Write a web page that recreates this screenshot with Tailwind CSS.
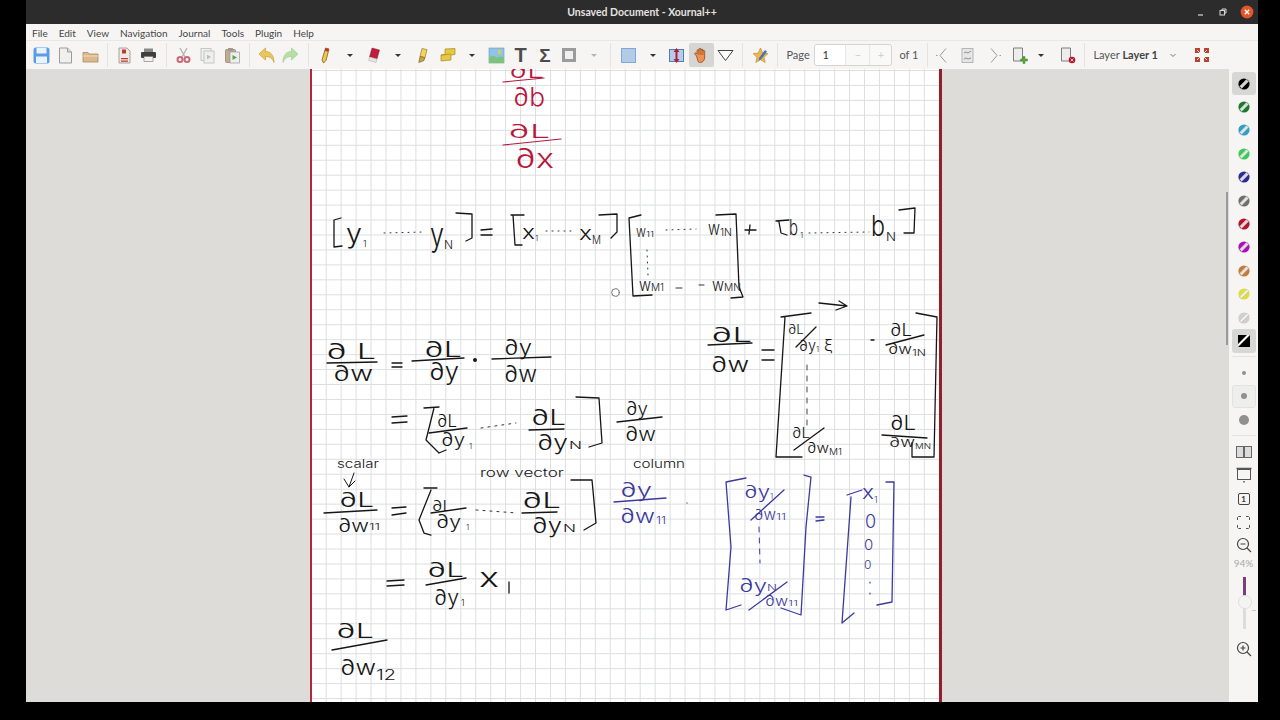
<!doctype html>
<html lang="en">
  <head>
    <meta charset="UTF-8" />
    <title>Unsaved Document - Xournal++</title>
    <script src="https://cdn.jsdelivr.net/npm/@tailwindcss/browser@4"></script>
  </head>
  <body class="bg-black w-[1280px] h-[720px] overflow-hidden font-['Lato',sans-serif]">
    <!-- shared pen colour swatch, tinted through currentColor -->
    <svg class="hidden">
      <symbol id="pen" viewBox="0 0 14 14">
        <circle cx="7" cy="7" r="5.6" fill="currentColor" />
        <path d="M2.6 9.2 9.4 2.2 11.6 4.4 4.8 11.6Z" fill="#fff" fill-opacity="0.85" />
        <path d="M2 10.4 10.4 2M3.8 12 12 3.8" stroke="#a8a8a8" stroke-width="0.7" fill="none" />
      </symbol>
    </svg>

    <div class="ml-[26px] w-[1232px] h-[702px] flex flex-col bg-[#f6f5f4]">
      <!-- title bar -->
      <div class="h-[24px] shrink-0 bg-[#2d2c2c] relative flex items-center justify-center pt-[1px]">
        <span class="text-[10.5px] font-bold text-[#e4e3e1]">Unsaved Document - Xournal++</span>
        <div class="absolute right-[4px] top-0 h-[24px] flex items-center gap-[9px]">
          <svg class="w-[14px] h-[14px]" viewBox="0 0 14 14"><path d="M4 10h5" stroke="#d8d8d8" stroke-width="1.2" /></svg>
          <svg class="w-[14px] h-[14px] ml-[-1px]" viewBox="0 0 14 14" fill="none" stroke="#d8d8d8"><rect x="4" y="5.5" width="4.5" height="4.5" /><path d="M6 5.5V4h4v4H8.5" /></svg>
          <svg class="w-[14px] h-[14px] ml-[1px]" viewBox="0 0 14 14"><circle cx="7" cy="7" r="6.4" fill="#e2562a" /><path d="M4.8 4.8l4.4 4.4M9.2 4.8l-4.4 4.4" stroke="#fff" stroke-width="1.3" /></svg>
        </div>
      </div>

      <!-- menu -->
      <div class="h-[17px] shrink-0 flex items-center gap-[11px] pl-[6px] pt-[2px] text-[10px] text-[#454545] border-b border-[#e8e7e5]">
        <span>File</span><span>Edit</span><span>View</span><span>Navigation</span><span>Journal</span><span>Tools</span><span>Plugin</span><span>Help</span>
      </div>

      <!-- toolbar -->
      <div class="h-[28px] shrink-0 flex items-center pl-[3px] text-[11px] text-[#555]">
        <div class="w-[24.42px] h-[24px] flex items-center justify-center">
          <svg class="w-[17px] h-[17px]" viewBox="0 0 17 17"><rect x="0.5" y="0.5" width="16" height="16" rx="2.5" fill="#5b9ce6" /><rect x="3.5" y="1" width="10" height="5.5" fill="#eaf2fc" /><rect x="3" y="9.5" width="11" height="6.5" fill="#eaf2fc" /></svg>
        </div>
        <div class="w-[24.42px] h-[24px] flex items-center justify-center">
          <svg class="w-[17px] h-[17px]" viewBox="0 0 17 17"><path d="M2.5 1h8l4 4v11h-12Z" fill="#f0f0ef" stroke="#9b9b9b" /><path d="M10.5 1v4h4" fill="#ddd" stroke="#9b9b9b" /></svg>
        </div>
        <div class="w-[24.42px] h-[24px] flex items-center justify-center">
          <svg class="w-[17px] h-[17px]" viewBox="0 0 17 17"><path d="M1 5.5h5l1 1.5h9v8H1Z" fill="#dcb98c" stroke="#a58a63" stroke-width="0.8" /><path d="M1 9h15" stroke="#f0dcc0" /></svg>
        </div>
        <div class="w-[10px] h-[24px] flex justify-center"><div class="w-px h-full bg-[#e4e3e1]"></div></div>
        <div class="w-[24.42px] h-[24px] flex items-center justify-center">
          <svg class="w-[17px] h-[17px]" viewBox="0 0 17 17"><path d="M3 1h8l3 3v12H3Z" fill="#efe8e6" stroke="#9b8f8c" stroke-width="0.8" /><path d="M6 2.5h4v4H6ZM5 11h7v1.2H5ZM5 13.5h7v1.2H5Z" fill="#c0392f" /></svg>
        </div>
        <div class="w-[24.42px] h-[24px] flex items-center justify-center">
          <svg class="w-[17px] h-[17px]" viewBox="0 0 17 17"><rect x="4" y="1.5" width="9" height="4" fill="#8a8a8a" /><rect x="1" y="5" width="15" height="6" rx="1" fill="#3f3f3f" /><rect x="4" y="9.5" width="9" height="5" fill="#f2f2f2" stroke="#777" stroke-width="0.6" /></svg>
        </div>
        <div class="w-[10px] h-[24px] flex justify-center"><div class="w-px h-full bg-[#e4e3e1]"></div></div>
        <div class="w-[24.42px] h-[24px] flex items-center justify-center">
          <svg class="w-[17px] h-[17px]" viewBox="0 0 17 17" fill="none"><path d="M5 1l5 9M12 1l-5 9" stroke="#b5b5b5" stroke-width="1.4" /><circle cx="5" cy="12.5" r="2.5" stroke="#c9687a" stroke-width="2" /><circle cx="12" cy="12.5" r="2.5" stroke="#c9687a" stroke-width="2" /></svg>
        </div>
        <div class="w-[24.42px] h-[24px] flex items-center justify-center">
          <svg class="w-[17px] h-[17px]" viewBox="0 0 17 17"><rect x="2" y="1.5" width="10" height="12" fill="#efefee" stroke="#c6c6c6" /><rect x="5" y="4" width="10" height="12" fill="#efefee" stroke="#c6c6c6" /><path d="M8 7.5l4 2.5-4 2.5Z" fill="#a5cfa5" /></svg>
        </div>
        <div class="w-[24.42px] h-[24px] flex items-center justify-center">
          <svg class="w-[17px] h-[17px]" viewBox="0 0 17 17"><rect x="1.5" y="2.5" width="10" height="13" rx="1" fill="#c2ab8c" stroke="#8d7b65" stroke-width="0.7" /><rect x="4" y="1" width="5" height="3" fill="#9a9a9a" /><rect x="6" y="5" width="9.5" height="11" fill="#eee" stroke="#999" stroke-width="0.7" /><path d="M8.5 8l4.5 2.5L8.5 13Z" fill="#58a83f" /></svg>
        </div>
        <div class="w-[10px] h-[24px] flex justify-center"><div class="w-px h-full bg-[#e4e3e1]"></div></div>
        <div class="w-[24.42px] h-[24px] flex items-center justify-center">
          <svg class="w-[17px] h-[17px]" viewBox="0 0 17 17"><path d="M1 7l6.5-6v3.5c5 0 8.5 3.5 8.5 11-1.5-4-4-6-8.5-6V13Z" fill="#ecc65a" stroke="#c99f36" stroke-width="0.7" /></svg>
        </div>
        <div class="w-[24.42px] h-[24px] flex items-center justify-center">
          <svg class="w-[17px] h-[17px]" viewBox="0 0 17 17"><path d="M16 7L9.5 1v3.5C4.500 4.500 1 8 1 15.500c1.500-4 4-6 8.500-6V13Z" fill="#b5dfa5" stroke="#a0cf90" stroke-width="0.7" /></svg>
        </div>
        <div class="w-[10px] h-[24px] flex justify-center"><div class="w-px h-full bg-[#e4e3e1]"></div></div>
        <div class="w-[24.42px] h-[24px] flex items-center justify-center">
          <svg class="w-[17px] h-[17px]" viewBox="0 0 17 17"><path d="M8.500 1l3.500 1-3 11.500-2.500 2.500-1.500-3Z" fill="#edc64c" stroke="#7d6128" stroke-width="0.8" /><path d="M8.500 1l3.500 1-.8 2.800-3.500-1Z" fill="#c0392f" /></svg>
        </div>
        <div class="w-[24.42px] h-[24px] flex items-center justify-center"><div class="border-x-[3px] border-t-[3.5px] border-x-transparent border-t-[#333]"></div></div>
        <div class="w-[24.42px] h-[24px] flex items-center justify-center">
          <svg class="w-[17px] h-[17px]" viewBox="0 0 17 17"><path d="M6 1l7.500 2-2.500 9-7.500-2Z" fill="#c01c3c" stroke="#8f1530" stroke-width="0.5" /><path d="M3.500 10l7.500 2-.9 3.500-7.500-2Z" fill="#e6e3e1" stroke="#aaa" stroke-width="0.5" /></svg>
        </div>
        <div class="w-[24.42px] h-[24px] flex items-center justify-center"><div class="border-x-[3px] border-t-[3.5px] border-x-transparent border-t-[#333]"></div></div>
        <div class="w-[24.42px] h-[24px] flex items-center justify-center">
          <svg class="w-[17px] h-[17px]" viewBox="0 0 17 17"><path d="M8 1.500l5 1.200-2 8-5-1.200Z" fill="#f3d55b" stroke="#8b7a2d" stroke-width="0.7" /><path d="M6 9.500l5 1.200-1.200 3-5 1.800Z" fill="#c3a53a" stroke="#6f6022" stroke-width="0.6" /></svg>
        </div>
        <div class="w-[24.42px] h-[24px] flex items-center justify-center">
          <svg class="w-[17px] h-[17px]" viewBox="0 0 17 17"><path d="M6 2l10-.5v6l-4 .5v5l-10 1v-6l4-.5Z" fill="#e9c83f" stroke="#a18a28" stroke-width="0.7" /><path d="M2 8l10-1" stroke="#a18a28" stroke-width="0.7" /></svg>
        </div>
        <div class="w-[24.42px] h-[24px] flex items-center justify-center"><div class="border-x-[3px] border-t-[3.5px] border-x-transparent border-t-[#333]"></div></div>
        <div class="w-[24.42px] h-[24px] flex items-center justify-center">
          <svg class="w-[17px] h-[17px]" viewBox="0 0 17 17"><rect x="1" y="1" width="15" height="15" fill="#8fc4e8" stroke="#5f9dbb" stroke-width="0.6" /><path d="M1 16v-5c3-3 5-3 8 0 2-2 5-2 7 0v5Z" fill="#7dc47a" /><circle cx="11.500" cy="5" r="2" fill="#e3c94f" /></svg>
        </div>
        <div class="w-[24.42px] h-[24px] flex items-center justify-center text-[20px] leading-none font-bold text-[#4c4c4c] font-['Liberation_Sans',sans-serif]">T</div>
        <div class="w-[24.42px] h-[24px] flex items-center justify-center text-[19px] leading-none font-bold text-[#4c4c4c] font-['Liberation_Sans',sans-serif]">Σ</div>
        <div class="w-[24.42px] h-[24px] flex items-center justify-center"><div class="w-[14px] h-[14px] border-[3px] border-[#9b9b9b] bg-[#f0f0f0]"></div></div>
        <div class="w-[24.42px] h-[24px] flex items-center justify-center"><div class="border-x-[3px] border-t-[3.5px] border-x-transparent border-t-[#b5b5b5]"></div></div>
        <div class="w-[10px] h-[24px] flex justify-center"><div class="w-px h-full bg-[#e4e3e1]"></div></div>
        <div class="w-[24.42px] h-[24px] flex items-center justify-center"><div class="w-[15px] h-[15px] bg-[#b4cbe8] border border-[#7ea6d6]"></div></div>
        <div class="w-[24.42px] h-[24px] flex items-center justify-center"><div class="border-x-[3px] border-t-[3.5px] border-x-transparent border-t-[#333]"></div></div>
        <div class="w-[24.42px] h-[24px] flex items-center justify-center">
          <svg class="w-[17px] h-[17px]" viewBox="0 0 17 17"><rect x="1.500" y="2.500" width="14" height="12" fill="#b6cdea" stroke="#4f7cb5" /><path d="M8.500 1l3 4h-2v7h2l-3 4-3-4h2V5h-2Z" fill="#b01e3a" /></svg>
        </div>
        <div class="w-[24.42px] h-[24px] rounded-[2px] bg-[#d5d5d4] flex items-center justify-center">
          <svg class="w-[17px] h-[17px]" viewBox="0 0 17 17"><path d="M3.500 9l-2-2.500c.8-1 2-.8 2.600.2V3.500c0-1.200 1.700-1.200 1.800 0V2.300c0-1.300 1.900-1.300 2 0v.7c.1-1.200 1.900-1.200 2 0v1c.2-1 1.800-.8 1.800.3V10c0 3.500-2 5.500-4.500 5.500S5 14 3.500 9Z" fill="#f0914f" stroke="#8c4a1c" stroke-width="0.8" /><path d="M5.900 3.500V8M7.900 2.500V8M9.900 3V8" stroke="#8c4a1c" stroke-width="0.7" fill="none" /></svg>
        </div>
        <div class="w-[24.42px] h-[24px] flex items-center justify-center">
          <svg class="w-[17px] h-[17px]" viewBox="0 0 17 17"><path d="M1 3.500h15l-7.500 10Z" fill="#fff" stroke="#444" stroke-width="1" /></svg>
        </div>
        <div class="w-[10px] h-[24px] flex justify-center"><div class="w-px h-full bg-[#e4e3e1]"></div></div>
        <div class="w-[24.42px] h-[24px] flex items-center justify-center">
          <svg class="w-[17px] h-[17px]" viewBox="0 0 17 17"><path d="M8.500 1l2.300 5 5.200.6-3.900 3.600 1.100 5.300-4.700-2.700-4.700 2.700 1.100-5.300L1 6.600l5.200-.6Z" fill="#e9b949" stroke="#b98a26" stroke-width="0.6" /><path d="M7 11l6-8 2 1.500-6 8-2.500 1Z" fill="#4f6fc0" /></svg>
        </div>
        <div class="w-[10px] h-[24px] flex justify-center"><div class="w-px h-full bg-[#e4e3e1]"></div></div>
        <span class="w-[24px] ml-[4px]">Page</span>
        <div class="ml-[4px] w-[78px] h-[22px] flex border border-[#d5d4d2] rounded-[3px] bg-[#f9f9f8]">
          <span class="w-[30px] pl-[7px] leading-[20px] text-[#333] bg-white rounded-l-[3px]">1</span>
          <span class="w-[24px] text-center leading-[20px] text-[#cfcfcf] border-l border-[#e8e7e5]">−</span>
          <span class="flex-1 text-center leading-[20px] text-[#cfcfcf] border-l border-[#e8e7e5]">+</span>
        </div>
        <span class="ml-[7px] w-[20px] whitespace-nowrap">of 1</span>
        <div class="ml-[3px] w-[10px] h-[24px] flex justify-center"><div class="w-px h-full bg-[#e4e3e1]"></div></div>
        <div class="w-[20px] h-[24px] flex items-center justify-center">
          <svg class="w-[17px] h-[17px]" viewBox="0 0 17 17" fill="none" stroke="#9a9a9a"><path d="M12 1.500 6 8.500l6 7" /><path d="M2 8.500h1.500" /></svg>
        </div>
        <div class="w-[32px] h-[24px] flex items-center justify-center">
          <svg class="w-[14px] h-[15px]" viewBox="0 0 14 15"><rect x="1" y="0.500" width="11" height="14" fill="#e6e6e6" stroke="#b5b5b5" /><path d="M3 5l2-1 2 1 3-2M3 11l2-1 2 1 3-1" stroke="#8f8f8f" fill="none" /></svg>
        </div>
        <div class="w-[20px] h-[24px] flex items-center justify-center">
          <svg class="w-[17px] h-[17px]" viewBox="0 0 17 17" fill="none" stroke="#9a9a9a"><path d="M5 1.500l6 7-6 7" /><path d="M13.500 8.500H15" /></svg>
        </div>
        <div class="w-[30px] h-[24px] flex items-center justify-center">
          <svg class="w-[17px] h-[17px]" viewBox="0 0 17 17"><path d="M2.500 1h9v13h-9Z" fill="#ededec" stroke="#7f7f7f" /><path d="M12 9.500h2V12h2.500v2H14v2.500h-2V14H9.500v-2H12Z" fill="#57a83f" stroke="#3d8a2b" stroke-width="0.5" /></svg>
        </div>
        <div class="w-[14px] h-[24px] flex items-center justify-center"><div class="border-x-[3px] border-t-[3.5px] border-x-transparent border-t-[#333]"></div></div>
        <div class="ml-[3px] w-[33px] h-[24px] flex items-center justify-center">
          <svg class="w-[17px] h-[17px]" viewBox="0 0 17 17"><path d="M2.500 1h9v13h-9Z" fill="#ededec" stroke="#7f7f7f" /><circle cx="13" cy="13" r="3.300" fill="#b5122b" /><path d="M11.500 11.500l3 3M14.500 11.500l-3 3" stroke="#fff" stroke-width="0.7" /></svg>
        </div>
        <div class="w-px h-[24px] bg-[#e4e3e1]"></div>
        <span class="ml-[8px] w-[24px]">Layer</span>
        <span class="ml-[5px] w-[34px] whitespace-nowrap font-bold text-[#444]">Layer 1</span>
        <div class="w-[34px] h-[24px] flex items-center justify-center">
          <svg class="w-[8px] h-[5px]" viewBox="0 0 8 5" fill="none" stroke="#777"><path d="M1.500 1 4 3.500 6.500 1" /></svg>
        </div>
        <div class="w-[24px] h-[24px] flex items-center justify-center">
          <svg class="w-[16px] h-[16px]" viewBox="0 0 16 16" fill="#b5452c"><path d="M1 1h5v5H1ZM10 1h5v5h-5ZM1 10h5v5H1ZM10 10h5v5h-5Z" /><path d="M3 3l3 3M13 3l-3 3M3 13l3-3M13 13l-3-3" stroke="#fff" stroke-width="0.8" /></svg>
        </div>
      </div>

      <div class="flex-1 flex min-h-0">
        <!-- canvas -->
        <div class="relative w-[1203px] bg-[#dddcd8] overflow-hidden">
          <div class="relative ml-[284px] w-[632px] h-full border-l-2 border-r-[3px] border-l-[#b3263c] border-r-[#931f2c] bg-white bg-[linear-gradient(#dcdee0_1px,transparent_1px),linear-gradient(90deg,#dcdee0_1px,transparent_1px)] bg-[size:14.96px_14.96px] bg-[position:13.7px_1px]">
            <svg class="absolute left-[-2px] top-0 w-[632px] h-[633px] font-['Inter',sans-serif] font-light" viewBox="311 69 632 633" fill="none" stroke-linecap="round" stroke-linejoin="round">
              <!-- red ink -->
              <g fill="#b8173c">
                <text x="510" y="78" font-size="20" textLength="35" lengthAdjust="spacingAndGlyphs">∂L</text>
                <text x="514" y="106" font-size="25" textLength="32" lengthAdjust="spacingAndGlyphs">∂b</text>
                <text x="509" y="138" font-size="19" textLength="42" lengthAdjust="spacingAndGlyphs">∂L</text>
                <text x="516" y="168" font-size="27" textLength="39" lengthAdjust="spacingAndGlyphs">∂x</text>
              </g>
              <g stroke="#b8173c" stroke-width="1.200">
                <path d="M504 82 545 78M504 145 562 139" />
              </g>

              <!-- black ink: first row -->
              <g fill="#161616" font-size="22">
                <text x="347" y="243" font-size="27" textLength="16" lengthAdjust="spacingAndGlyphs">y</text>
                <text x="364" y="247" font-size="9">1</text>
                <text x="431" y="246" font-size="32" textLength="14" lengthAdjust="spacingAndGlyphs">y</text>
                <text x="445" y="249" font-size="11" textLength="9" lengthAdjust="spacingAndGlyphs">N</text>
                <text x="523" y="239" font-size="20" textLength="13" lengthAdjust="spacingAndGlyphs">x</text>
                <text x="536" y="241" font-size="8">1</text>
                <text x="580" y="240" font-size="20" textLength="13" lengthAdjust="spacingAndGlyphs">x</text>
                <text x="593" y="244" font-size="11" textLength="9" lengthAdjust="spacingAndGlyphs">M</text>
                <text x="637" y="237" font-size="15" textLength="10" lengthAdjust="spacingAndGlyphs">w</text>
                <text x="647" y="237" font-size="8" textLength="8" lengthAdjust="spacingAndGlyphs">11</text>
                <text x="709" y="235" font-size="19" textLength="12" lengthAdjust="spacingAndGlyphs">w</text>
                <text x="721" y="236" font-size="10" textLength="12" lengthAdjust="spacingAndGlyphs">1N</text>
                <text x="640" y="291" font-size="17" textLength="12" lengthAdjust="spacingAndGlyphs">w</text>
                <text x="652" y="291" font-size="10" textLength="13" lengthAdjust="spacingAndGlyphs">M1</text>
                <text x="713" y="291" font-size="17" textLength="12" lengthAdjust="spacingAndGlyphs">w</text>
                <text x="725" y="291" font-size="10" textLength="17" lengthAdjust="spacingAndGlyphs">MN</text>
                <text x="790" y="235" font-size="22" textLength="9" lengthAdjust="spacingAndGlyphs">b</text>
                <text x="801" y="238" font-size="8">1</text>
                <text x="872" y="236" font-size="28" textLength="14" lengthAdjust="spacingAndGlyphs">b</text>
                <text x="887" y="241" font-size="12" textLength="10" lengthAdjust="spacingAndGlyphs">N</text>
              </g>
              <g stroke="#161616" stroke-width="1.300">
                <path d="M342 218 335 220 335 247 343 246" />
                <path d="M457 213 473 214 473 238 467 241" />
                <path d="M482 230 493 229M482 235 493 235" />
                <path d="M512 215 525 215M514 215 516 245 523 245" />
                <path d="M600 215 618 214 618 232 612 238" />
                <path d="M642 215 630 218 634 296 653 295" />
                <path d="M717 215 737 214 740 287 744 297 732 298" />
                <path d="M746 230 757 230M751 225 750 234" />
                <path d="M777 221 790 220M780 222 782 233 788 235" />
                <path d="M900 210 916 208 915 233 905 233" />
                <path d="M820 303 848 306 837 310M840 301 848 306" />
              </g>
              <g stroke="#333" stroke-width="1" stroke-dasharray="1 5">
                <path d="M385 233 425 232M547 231 573 231M667 230 697 229M810 233 870 232M648 250 649 275" />
                <path d="M677 288 683 288M700 285 705 285" stroke-dasharray="none" />
              </g>
              <circle cx="616.500" cy="292.500" r="3.800" stroke="#707070" stroke-width="1" fill="#fff" />

              <!-- black ink: matrix of partials, right -->
              <g fill="#161616">
                <text x="712" y="342" font-size="20" textLength="41" lengthAdjust="spacingAndGlyphs">∂L</text>
                <text x="712" y="372" font-size="22" textLength="38" lengthAdjust="spacingAndGlyphs">∂w</text>
                <text x="789" y="334" font-size="13" textLength="16" lengthAdjust="spacingAndGlyphs">∂L</text>
                <text x="800" y="351" font-size="15" textLength="17" lengthAdjust="spacingAndGlyphs">∂y</text>
                <text x="817" y="352" font-size="8">1</text>
                <text x="825" y="351" font-size="16">ξ</text>
                <text x="891" y="336" font-size="17" textLength="22" lengthAdjust="spacingAndGlyphs">∂L</text>
                <text x="889" y="354" font-size="14" textLength="24" lengthAdjust="spacingAndGlyphs">∂w</text>
                <text x="913" y="356" font-size="9" textLength="14" lengthAdjust="spacingAndGlyphs">1N</text>
                <text x="793" y="438" font-size="14" textLength="18" lengthAdjust="spacingAndGlyphs">∂L</text>
                <text x="808" y="453" font-size="14" textLength="22" lengthAdjust="spacingAndGlyphs">∂w</text>
                <text x="830" y="455" font-size="9" textLength="13" lengthAdjust="spacingAndGlyphs">M1</text>
                <text x="891" y="430" font-size="20" textLength="26" lengthAdjust="spacingAndGlyphs">∂L</text>
                <text x="890" y="447" font-size="13" textLength="26" lengthAdjust="spacingAndGlyphs">∂w</text>
                <text x="916" y="449" font-size="8" textLength="16" lengthAdjust="spacingAndGlyphs">MN</text>
              </g>
              <g stroke="#161616" stroke-width="1.300">
                <path d="M709 345 753 343M763 350 775 350M763 360 775 360" />
                <path d="M812 313 782 317M786 317 777 457 803 457" />
                <path d="M917 313 938 317 935 457 913 457 913 443" />
                <path d="M797 347 817 327M872 340 875 340M887 345 925 335" />
                <path d="M795 450 825 428M883 435 928 438" />
              </g>
              <path d="M808 365 808 425" stroke="#444" stroke-width="1" stroke-dasharray="5 6" />

              <!-- black ink: left column -->
              <g fill="#161616">
                <text x="327" y="359" font-size="22" textLength="50" lengthAdjust="spacingAndGlyphs">∂ L</text>
                <text x="334" y="381" font-size="22" textLength="40" lengthAdjust="spacingAndGlyphs">∂w</text>
                <text x="425" y="357" font-size="21" textLength="38" lengthAdjust="spacingAndGlyphs">∂L</text>
                <text x="430" y="380" font-size="24" textLength="30" lengthAdjust="spacingAndGlyphs">∂y</text>
                <text x="505" y="355" font-size="21" textLength="28" lengthAdjust="spacingAndGlyphs">∂y</text>
                <text x="505" y="382" font-size="23" textLength="33" lengthAdjust="spacingAndGlyphs">∂w</text>
                <text x="438" y="427" font-size="17" textLength="20" lengthAdjust="spacingAndGlyphs">∂L</text>
                <text x="442" y="446" font-size="18" textLength="24" lengthAdjust="spacingAndGlyphs">∂y</text>
                <text x="470" y="449" font-size="8">1</text>
                <text x="532" y="425" font-size="22" textLength="35" lengthAdjust="spacingAndGlyphs">∂L</text>
                <text x="538" y="450" font-size="22" textLength="31" lengthAdjust="spacingAndGlyphs">∂y</text>
                <text x="570" y="449" font-size="10" textLength="13" lengthAdjust="spacingAndGlyphs">N</text>
                <text x="627" y="415" font-size="18" textLength="22" lengthAdjust="spacingAndGlyphs">∂y</text>
                <text x="626" y="441" font-size="20" textLength="31" lengthAdjust="spacingAndGlyphs">∂w</text>
                <text x="338" y="468" font-size="11" textLength="42" lengthAdjust="spacingAndGlyphs">scalar</text>
                <text x="481" y="477" font-size="11" textLength="84" lengthAdjust="spacingAndGlyphs">row vector</text>
                <text x="634" y="468" font-size="11" textLength="52" lengthAdjust="spacingAndGlyphs">column</text>
                <text x="340" y="507" font-size="20" textLength="35" lengthAdjust="spacingAndGlyphs">∂L</text>
                <text x="339" y="532" font-size="18" textLength="31" lengthAdjust="spacingAndGlyphs">∂w</text>
                <text x="370" y="530" font-size="9" textLength="11" lengthAdjust="spacingAndGlyphs">11</text>
                <text x="433" y="511" font-size="15" textLength="20" lengthAdjust="spacingAndGlyphs">∂L</text>
                <text x="437" y="528" font-size="18" textLength="25" lengthAdjust="spacingAndGlyphs">∂y</text>
                <text x="467" y="530" font-size="8">1</text>
                <text x="523" y="508" font-size="22" textLength="39" lengthAdjust="spacingAndGlyphs">∂L</text>
                <text x="533" y="533" font-size="21" textLength="30" lengthAdjust="spacingAndGlyphs">∂y</text>
                <text x="564" y="532" font-size="10" textLength="13" lengthAdjust="spacingAndGlyphs">N</text>
                <text x="428" y="577" font-size="20" textLength="37" lengthAdjust="spacingAndGlyphs">∂L</text>
                <text x="435" y="605" font-size="22" textLength="25" lengthAdjust="spacingAndGlyphs">∂y</text>
                <text x="462" y="606" font-size="9">1</text>
                <text x="480" y="587" font-size="27" textLength="20" lengthAdjust="spacingAndGlyphs">x</text>
                <text x="337" y="638" font-size="20" textLength="38" lengthAdjust="spacingAndGlyphs">∂L</text>
                <text x="341" y="675" font-size="22" textLength="36" lengthAdjust="spacingAndGlyphs">∂w</text>
                <text x="377" y="680" font-size="14" textLength="20" lengthAdjust="spacingAndGlyphs">12</text>
              </g>
              <g stroke="#161616" stroke-width="1.300">
                <path d="M328 363 378 362M393 363 403 363M393 367 403 367" />
                <path d="M413 361 465 358M493 359 552 357" />
                <path d="M393 417 408 416M393 423 408 422" />
                <path d="M425 408 440 407M435 408 427 440 440 453 447 450" />
                <path d="M430 433 468 428M530 430 565 429" />
                <path d="M577 397 600 398 603 443 590 447" />
                <path d="M618 422 663 417" />
                <path d="M355 473 350 487M345 479 350 487 356 481" stroke-width="1" />
                <path d="M325 513 378 510M393 508 407 507M393 515 407 513" />
                <path d="M425 488 438 488M432 490 420 520 425 533 432 535" />
                <path d="M432 513 467 508M523 513 558 512" />
                <path d="M572 480 593 480 597 523 585 530" />
                <path d="M388 581 405 580M388 586 405 585M427 585 467 578M510 582 510 593" />
                <path d="M333 650 388 640" />
              </g>
              <circle cx="476" cy="360" r="2" fill="#161616" />
              <g stroke="#333" stroke-width="1" stroke-dasharray="2 5">
                <path d="M482 428 517 423M477 510 518 513" />
              </g>

              <!-- blue ink -->
              <g fill="#3c3a9c">
                <text x="621" y="497" font-size="20" textLength="32" lengthAdjust="spacingAndGlyphs">∂y</text>
                <text x="621" y="523" font-size="20" textLength="35" lengthAdjust="spacingAndGlyphs">∂w</text>
                <text x="657" y="524" font-size="10" textLength="10" lengthAdjust="spacingAndGlyphs">11</text>
                <text x="745" y="498" font-size="17" textLength="26" lengthAdjust="spacingAndGlyphs">∂y</text>
                <text x="771" y="499" font-size="8">1</text>
                <text x="755" y="520" font-size="15" textLength="22" lengthAdjust="spacingAndGlyphs">∂w</text>
                <text x="777" y="520" font-size="9" textLength="10" lengthAdjust="spacingAndGlyphs">11</text>
                <text x="740" y="592" font-size="18" textLength="28" lengthAdjust="spacingAndGlyphs">∂y</text>
                <text x="768" y="591" font-size="9" textLength="10" lengthAdjust="spacingAndGlyphs">N</text>
                <text x="766" y="606" font-size="14" textLength="23" lengthAdjust="spacingAndGlyphs">∂w</text>
                <text x="789" y="606" font-size="8" textLength="10" lengthAdjust="spacingAndGlyphs">11</text>
                <text x="863" y="499" font-size="20" textLength="12" lengthAdjust="spacingAndGlyphs">x</text>
                <text x="875" y="503" font-size="9">1</text>
                <text x="866" y="528" font-size="18">0</text>
                <text x="865" y="550" font-size="15">0</text>
                <text x="865" y="569" font-size="12">0</text>
              </g>
              <g stroke="#3c3a9c" stroke-width="1.300">
                <path d="M615 502 667 498" />
                <path d="M747 478 727 482 732 547 727 610 742 605" />
                <path d="M752 520 785 490M750 610 788 582" />
                <path d="M805 475 812 477 807 527 802 615 782 608" />
                <path d="M817 517 825 517M817 521 825 520" />
                <path d="M863 490 848 495M852 497 843 623 855 613" />
                <path d="M887 482 895 482 893 602 878 605" />
                <path d="M760 527 761 563" stroke-width="1" stroke-dasharray="5 6" />
                <path d="M871 582 871 604" stroke-width="1.200" stroke-dasharray="1 10" />
              </g>
              <circle cx="688" cy="503" r="0.700" fill="#555" />
            </svg>
          </div>
          <!-- overlay scrollbar -->
          <div class="absolute right-[1px] top-[123px] w-[2px] h-[153px] bg-[#9a9a9a]"></div>
        </div>

        <!-- right toolbar -->
        <div class="w-[29px] shrink-0 pt-[3px] flex flex-col items-center">
          <div class="w-[24px] h-[23.4px] shrink-0 rounded-[3px] bg-[#d7d7d6] flex items-center justify-center"><svg class="w-[14px] h-[14px] text-black"><use href="#pen" /></svg></div>
          <div class="w-[24px] h-[23.4px] shrink-0 flex items-center justify-center"><svg class="w-[14px] h-[14px] text-[#1d7a2a]"><use href="#pen" /></svg></div>
          <div class="w-[24px] h-[23.4px] shrink-0 flex items-center justify-center"><svg class="w-[14px] h-[14px] text-[#2f9fc4]"><use href="#pen" /></svg></div>
          <div class="w-[24px] h-[23.4px] shrink-0 flex items-center justify-center"><svg class="w-[14px] h-[14px] text-[#3bcb55]"><use href="#pen" /></svg></div>
          <div class="w-[24px] h-[23.4px] shrink-0 flex items-center justify-center"><svg class="w-[14px] h-[14px] text-[#2b2b94]"><use href="#pen" /></svg></div>
          <div class="w-[24px] h-[23.4px] shrink-0 flex items-center justify-center"><svg class="w-[14px] h-[14px] text-[#6e6e6e]"><use href="#pen" /></svg></div>
          <div class="w-[24px] h-[23.4px] shrink-0 flex items-center justify-center"><svg class="w-[14px] h-[14px] text-[#b5122b]"><use href="#pen" /></svg></div>
          <div class="w-[24px] h-[23.4px] shrink-0 flex items-center justify-center"><svg class="w-[14px] h-[14px] text-[#a811b5]"><use href="#pen" /></svg></div>
          <div class="w-[24px] h-[23.4px] shrink-0 flex items-center justify-center"><svg class="w-[14px] h-[14px] text-[#c67c38]"><use href="#pen" /></svg></div>
          <div class="w-[24px] h-[23.4px] shrink-0 flex items-center justify-center"><svg class="w-[14px] h-[14px] text-[#dede35]"><use href="#pen" /></svg></div>
          <div class="w-[24px] h-[23.4px] shrink-0 flex items-center justify-center"><svg class="w-[14px] h-[14px] text-[#cfcfcf]"><use href="#pen" /></svg></div>
          <div class="w-[24px] h-[23.4px] shrink-0 rounded-[3px] bg-[#d7d7d6] flex items-center justify-center">
            <svg class="w-[12px] h-[12px]" viewBox="0 0 12 12"><rect width="12" height="12" fill="#000" /><path d="M0 9 9 0h3L0 12Z" fill="#fff" /></svg>
          </div>
          <div class="w-[24px] h-[8.500px] shrink-0 flex items-center"><div class="w-full h-px bg-[#e4e3e1]"></div></div>
          <div class="w-[24px] h-[23.4px] shrink-0 flex items-center justify-center"><div class="w-[4px] h-[4px] rounded-full bg-[#909090]"></div></div>
          <div class="w-[24px] h-[23.4px] shrink-0 rounded-[3px] bg-[#eeeeed] border border-[#e2e2e0] flex items-center justify-center"><div class="w-[6px] h-[6px] rounded-full bg-[#909090]"></div></div>
          <div class="w-[24px] h-[23.4px] shrink-0 flex items-center justify-center"><div class="w-[10px] h-[10px] rounded-full bg-[#909090]"></div></div>
          <div class="w-[24px] h-[8.800px] shrink-0 flex items-center"><div class="w-full h-px bg-[#e4e3e1]"></div></div>
          <div class="w-[24px] h-[23.4px] shrink-0 flex items-center justify-center">
            <svg class="w-[16px] h-[12px]" viewBox="0 0 16 12" fill="#dcdcdc" stroke="#666"><rect x="0.500" y="0.500" width="7" height="11" /><rect x="8.500" y="0.500" width="7" height="11" /></svg>
          </div>
          <div class="w-[24px] h-[23.4px] shrink-0 flex items-center justify-center">
            <svg class="w-[16px] h-[16px]" viewBox="0 0 16 16" fill="none" stroke="#555"><rect x="1.500" y="2.500" width="13" height="10" /><path d="M0.500 1.500h15" stroke-width="1.500" /><path d="M8 14v1.500" stroke-width="1.500" /></svg>
          </div>
          <div class="w-[24px] h-[23.4px] shrink-0 flex items-center justify-center">
            <div class="w-[12px] h-[12px] border border-[#444] rounded-[2px] flex items-center justify-center text-[8px] leading-none font-bold text-[#333]">1</div>
          </div>
          <div class="w-[24px] h-[23.4px] shrink-0 flex items-center justify-center">
            <svg class="w-[13px] h-[13px]" viewBox="0 0 13 13" fill="none" stroke="#555"><path d="M0.500 4V1.500l1-1H4M9 .5h2.500l1 1V4M12.500 9v2.500l-1 1H9M4 12.500H1.500l-1-1V9" /></svg>
          </div>
          <div class="w-[24px] h-[23.4px] shrink-0 flex items-center justify-center">
            <svg class="w-[16px] h-[16px]" viewBox="0 0 16 16" fill="none" stroke="#444" stroke-width="1.200"><circle cx="7" cy="7" r="5.500" /><path d="M11 11l4 4M4.500 7h5" /></svg>
          </div>
          <div class="h-[12px] shrink-0 text-[10px] leading-[12px] text-[#a8a8a8]">94%</div>
          <div class="relative w-[24px] h-[58px] shrink-0 mt-[8px]">
            <div class="absolute left-[11px] top-0 w-[3px] h-[19px] bg-[#7a3e7a]"></div>
            <div class="absolute left-[11px] top-[19px] w-[3px] h-[33px] bg-[#dcdcdb]"></div>
            <div class="absolute left-[6px] top-[18px] w-[14px] h-[14px] rounded-full bg-[#f4f4f3] border border-[#e0dfdd]"></div>
            <div class="absolute left-[20px] top-[33px] w-[4px] h-px bg-[#c4c4c4]"></div>
          </div>
          <div class="w-[24px] h-[23.4px] shrink-0 mt-[2px] flex items-center justify-center">
            <svg class="w-[16px] h-[16px]" viewBox="0 0 16 16" fill="none" stroke="#444" stroke-width="1.200"><circle cx="7" cy="7" r="5.500" /><path d="M11 11l4 4M4.500 7h5M7 4.500v5" /></svg>
          </div>
        </div>
      </div>
    </div>
  </body>
</html>
